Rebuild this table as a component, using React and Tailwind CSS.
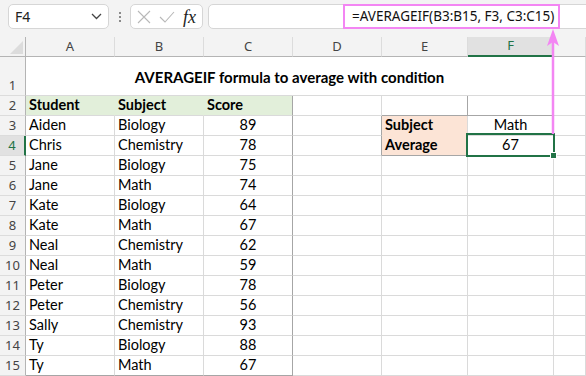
import React from 'react';

const cols = ['A', 'B', 'C', 'D', 'E', 'F', ''];
const widths = ['w-[89px]', 'w-[89px]', 'w-[89px]', 'w-[89px]', 'w-[86px]', 'w-[86px]', 'flex-1'];

const data = [
  ['Aiden', 'Biology', 89],
  ['Chris', 'Chemistry', 78],
  ['Jane', 'Biology', 75],
  ['Jane', 'Math', 74],
  ['Kate', 'Biology', 64],
  ['Kate', 'Math', 67],
  ['Neal', 'Chemistry', 62],
  ['Neal', 'Math', 59],
  ['Peter', 'Biology', 78],
  ['Peter', 'Chemistry', 56],
  ['Sally', 'Chemistry', 93],
  ['Ty', 'Biology', 88],
  ['Ty', 'Math', 67],
];

const GRID = 'border-r-[#dadada]';
const GRIDB = 'border-b-[#dadada]';
const DARK = 'border-r-[#a6a6a6]';
const DARKB = 'border-b-[#a6a6a6]';

const Cell = ({ w, r = GRID, b = GRIDB, className = '', children }) => (
  <div className={`${w} shrink-0 h-full border-r border-b ${r} ${b} flex items-end px-[3px] pb-[1px] leading-[18px] ${className}`}>
    {children}
  </div>
);

const RowHead = ({ n, active }) => (
  <div
    className={`w-[26px] shrink-0 h-full border-b border-b-[#dcdcdc] flex items-end justify-center pb-[1px] text-[13px] leading-[18px] font-['Noto_Sans'] ${
      active
        ? 'bg-[#e1e1e1] text-[#217346] border-r-2 border-r-[#217346]'
        : 'bg-[#f3f3f3] text-[#444] border-r border-r-[#b4b4b4]'
    }`}
  >
    {n}
  </div>
);

export default function App() {
  return (
    <div className="relative w-[586px] h-[376px] overflow-hidden bg-white font-['Lato'] text-[14.5px] text-black">
      {/* formula bar */}
      <div className="h-[37px] bg-[#f3f3f3] flex items-start pt-[4px] pl-[8px] font-['Noto_Sans']">
        <div className="w-[101px] shrink-0 h-[25px] bg-white border border-[#d6d6d6] rounded-[5px] flex items-center justify-between pl-[6px] pr-[6px] text-[14px] text-[#222]">
          <span>F4</span>
          <svg width="11" height="7" viewBox="0 0 11 7">
            <path d="M1 1l4.5 4.5L10 1" fill="none" stroke="#444" strokeWidth="1.3" />
          </svg>
        </div>
        <div className="w-[21px] shrink-0 h-[25px] flex flex-col items-center justify-center gap-[2px]">
          <span className="w-[2px] h-[2px] bg-[#8a8a8a]" />
          <span className="w-[2px] h-[2px] bg-[#8a8a8a]" />
          <span className="w-[2px] h-[2px] bg-[#8a8a8a]" />
        </div>
        <div className="w-[73px] shrink-0 h-[25px] bg-white border border-[#d6d6d6] rounded-[5px] flex items-center pl-[6px] gap-[8px]">
          <svg width="14" height="14" viewBox="0 0 14 14">
            <path d="M1 1l12 12M13 1L1 13" stroke="#b8b8b8" strokeWidth="1.1" />
          </svg>
          <svg width="16" height="12" viewBox="0 0 16 12">
            <path d="M1 6l5 5L15 1" fill="none" stroke="#b8b8b8" strokeWidth="1.1" />
          </svg>
          <span className="italic font-['Liberation_Serif'] text-[18px] text-[#222] leading-none">fx</span>
        </div>
        <div className="relative shrink-0 ml-[5px] w-[400px] h-[25px] bg-white border border-[#d6d6d6] rounded-[5px] flex items-center pl-[143px] text-[13.5px] text-[#111]">
          <span>=AVERAGEIF(B3:B15, F3, C3:C15)</span>
          <div className="absolute left-[134px] top-[-1px] w-[217px] h-[25px] border-2 border-[#f386f3]" />
        </div>
      </div>

      {/* column headers */}
      <div className="flex h-[20px] font-['Noto_Sans'] text-[13px] text-[#444]">
        <div className="w-[26px] shrink-0 h-full bg-[#f3f3f3] border-r border-b border-[#b4b4b4] flex items-end justify-end pr-[2px] pb-[2px]">
          <svg width="13" height="13" viewBox="0 0 13 13">
            <path d="M13 0V13H0Z" fill="#dcdcdc" />
          </svg>
        </div>
        {cols.map((c, i) => (
          <div
            key={i}
            className={`${widths[i]} shrink-0 h-full border-r border-r-[#dcdcdc] flex items-center justify-center ${
              c === 'F'
                ? 'bg-[#e1e1e1] text-[#217346] border-b-2 border-b-[#217346]'
                : 'bg-[#f3f3f3] border-b border-b-[#b4b4b4]'
            }`}
          >
            {c}
          </div>
        ))}
      </div>

      {/* row 1 */}
      <div className="flex h-[39px]">
        <RowHead n={1} />
        <div className="w-[528px] shrink-0 h-full border-r border-b border-[#dadada] flex items-end justify-center pb-[9px] font-bold text-[15px] leading-[18px]">
          AVERAGEIF formula to average with condition
        </div>
        <Cell w="flex-1" />
      </div>

      {/* row 2 */}
      <div className="flex h-[20px]">
        <RowHead n={2} />
        <Cell w={widths[0]} r="border-r-transparent" className="bg-[#e2efda] font-bold">Student</Cell>
        <Cell w={widths[1]} r="border-r-transparent" className="bg-[#e2efda] font-bold">Subject</Cell>
        <Cell w={widths[2]} r={DARK} className="bg-[#e2efda] font-bold">Score</Cell>
        <Cell w={widths[3]} />
        <Cell w={widths[4]} b={DARKB} r="border-r-[#a6a6a6]" />
        <Cell w={widths[5]} b={DARKB} />
        <Cell w={widths[6]} />
      </div>

      {/* data rows */}
      {data.map((d, i) => {
        const n = i + 3;
        const last = n === 15;
        return (
          <div key={n} className="flex h-[20px]">
            <RowHead n={n} active={n === 4} />
            <Cell w={widths[0]} b={last ? DARKB : GRIDB}>{d[0]}</Cell>
            <Cell w={widths[1]} b={last ? DARKB : GRIDB}>{d[1]}</Cell>
            <Cell w={widths[2]} r={DARK} b={last ? DARKB : GRIDB} className="justify-center">{d[2]}</Cell>
            <Cell w={widths[3]} r={n === 3 || n === 4 ? DARK : GRID} />
            {n === 3 ? (
              <>
                <Cell w={widths[4]} r="border-r-[#dadada]" b="border-b-transparent" className="bg-[#fce4d6] font-bold">Subject</Cell>
                <Cell w={widths[5]} r={DARK} className="justify-center">Math</Cell>
              </>
            ) : n === 4 ? (
              <>
                <Cell w={widths[4]} r="border-r-[#dadada]" b={DARKB} className="bg-[#fce4d6] font-bold">Average</Cell>
                <Cell w={widths[5]} className="relative justify-center">
                  67
                  <div className="absolute left-[-2px] top-[-3px] w-[89px] h-[24px] border-2 border-[#217346]" />
                  <div className="absolute right-[-4px] bottom-[-4px] w-[7px] h-[7px] bg-[#217346] border border-white" />
                </Cell>
              </>
            ) : (
              <>
                <Cell w={widths[4]} />
                <Cell w={widths[5]} />
              </>
            )}
            <Cell w={widths[6]} />
          </div>
        );
      })}

      {/* pink arrow from formula to F4 */}
      <svg className="absolute left-[545px] top-[28px]" width="16" height="108" viewBox="0 0 16 108">
        <path d="M8 12V106" stroke="#f386f3" strokeWidth="2.5" />
        <path d="M8 1L2 18L8 14L14 18Z" fill="#f386f3" />
      </svg>
    </div>
  );
}
